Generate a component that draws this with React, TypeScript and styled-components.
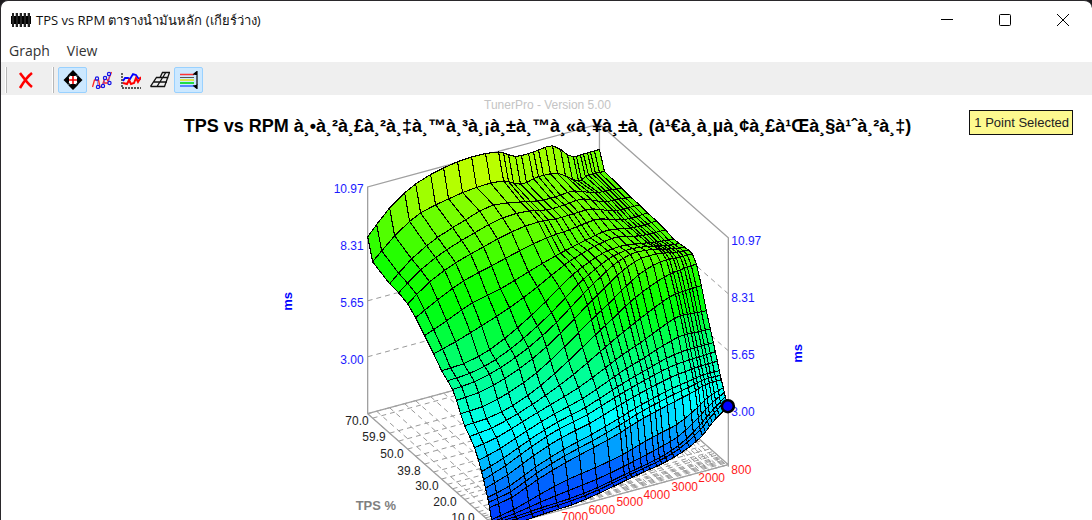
import React from "react";
import styled, { createGlobalStyle } from "styled-components";

const Global = createGlobalStyle`
  * { box-sizing: border-box; }
  html, body { margin: 0; background: #1c1a1d; overflow: hidden; }
  button { font: inherit; color: inherit; }
`;

const Window = styled.div`
  min-height: 100vh;
  display: flex;
  flex-direction: column;
  background: #fff;
  border-top: 1px solid #2a282b;
  border-left: 1px solid #2a282b;
  border-radius: 8px 8px 0 0;
  overflow: hidden;
  font-family: "Noto Sans", "Open Sans", sans-serif;
`;

const TitleBar = styled.header`
  display: flex;
  align-items: center;
  height: 38px;
  padding-left: 10px;
  gap: 5px;
`;

const WindowTitle = styled.span`
  flex: 1;
  font-family: "Open Sans", "Noto Sans", sans-serif;
  font-size: 13px;
  line-height: 20px;
  color: #111;
  white-space: nowrap;
`;

const WindowControls = styled.div`
  display: flex;
`;

const WindowButton = styled.button`
  display: flex;
  align-items: center;
  justify-content: center;
  width: 58px;
  height: 38px;
  padding: 0;
  border: 0;
  background: transparent;
`;

const MenuBar = styled.nav`
  display: flex;
  align-items: center;
  height: 23px;
  padding-left: 8px;
  gap: 17px;
`;

const MenuItem = styled.button`
  padding: 0;
  border: 0;
  background: transparent;
  font-family: "Open Sans", sans-serif;
  font-size: 14px;
  line-height: 20px;
  color: #333;
`;

const ToolBar = styled.div`
  display: flex;
  align-items: center;
  height: 33px;
  padding: 2px 4px 0;
  background: #efefef;
`;

const Grip = styled.span`
  width: 2px;
  height: 26px;
  background: #b8b8b8;
  border-left: 1px solid #fff;
`;

const Tool = styled.button<{ $on?: boolean }>`
  display: flex;
  align-items: center;
  justify-content: center;
  width: 29px;
  height: 26px;
  padding: 0;
  border: 1px solid ${(p) => (p.$on ? "#99d1ff" : "transparent")};
  border-radius: 2px;
  background: ${(p) => (p.$on ? "#cce8ff" : "transparent")};
`;

const ToolGroup = styled.div<{ $end?: number }>`
  display: flex;
  padding-left: 4px;
  padding-right: ${(p) => p.$end ?? 0}px;
`;

const Plot = styled.main`
  position: relative;
  flex: 1;
  display: grid;
  grid-template-rows: 425px;
  justify-items: stretch;
  font-family: "Liberation Sans", Arial, sans-serif;
`;

const Drawing = styled.svg`
  grid-area: 1 / 1;
  width: 100%;
  height: 425px;
  font-family: "Liberation Sans", Arial, sans-serif;
`;

const Heading = styled.div`
  grid-area: 1 / 1;
  z-index: 1;
  padding-left: 2px;
  text-align: center;
  pointer-events: none;
`;

const Version = styled.p`
  margin: 0;
  padding-top: 2px;
  font-size: 12px;
  line-height: 16px;
  color: #c4c4c4;
`;

const ChartTitle = styled.h1`
  margin: 0;
  padding-top: 2px;
  font-size: 18px;
  font-weight: 700;
  line-height: 22px;
  color: #000;
  white-space: nowrap;
`;

const Selection = styled.output`
  position: absolute;
  z-index: 2;
  top: 15px;
  right: 19px;
  padding: 0 3px 0 4px;
  border: 1px solid #111;
  background: #fdf98f;
  font-size: 13px;
  line-height: 23px;
  color: #222;
`;

/* Oblique projection of the plot box: an RPM offset runs right and up,
   a TPS offset runs right and down. */
const RPM_SPAN = 232;
const TPS_SPAN = 129;
const floorY = (c: number, r: number) => 414 - (63 * c) / RPM_SPAN + (114 * r) / TPS_SPAN;

const knotC = [0, 22, 48, 76, 104, 131, 148, 166, 185, 206, 216, 232];
const knotR = [0, 5, 22, 31, 40, 48, 57, 66, 74, 86, 93, 97, 107, 116, 122, 124, 126, 129];
const heights = [
  [237, 208, 184, 168, 157, 152, 156.5, 152, 145.7, 157, 154, 149.5],
  [262, 236, 213, 199, 187.5, 181, 184.3, 176.7, 173.3, 181, 175, 171.5],
  [284, 259, 237.5, 220, 205, 202, 201, 197, 191, 193, 191, 188],
  [293, 270, 250, 233, 218, 211, 210, 205, 199, 202, 200, 197],
  [304, 282, 263, 247, 232, 222, 219, 214, 209, 211, 209, 205],
  [318, 300, 281, 266, 251, 238, 232, 225, 219, 220, 218, 213],
  [336, 321, 303, 289, 272, 256, 247, 238, 230, 228, 226, 221],
  [354, 342, 326, 308, 287, 265, 254, 244, 237, 236, 234, 230],
  [371, 364, 350, 328, 302, 275, 262, 251, 245, 243, 242, 239],
  [392, 384, 370, 350, 325, 296, 279, 263, 253, 250, 250, 248],
  [414, 407, 393, 373, 347, 320, 304, 286, 270, 260, 258, 254],
  [426, 419, 406, 386, 361, 335, 319, 302, 287, 274, 270, 264],
  [448, 438, 422, 405, 388, 368, 355, 343, 329, 316, 314, 311],
  [480, 466, 447, 429, 415, 398, 388, 378, 368, 360, 357, 352],
  [508, 498, 480, 463, 448, 433, 422, 412, 402, 391, 385, 380],
  [520, 510, 495, 480, 468, 455, 445, 435, 425, 408, 398, 388],
  [524, 517, 508, 499, 488, 475, 467, 458, 446, 426, 414, 397],
  [530, 523, 514, 505, 493, 480, 472, 464, 453, 436, 423, 406],
];

const cols = [0, 9, 22, 37, 48, 63, 76, 90, 104, 118, 131, 136, 141, 148, 154, 161, 166, 171, 178, 185, 193, 200, 206, 209, 213, 216, 220, 223, 227, 232];
const rows = [0, 5, 22, 31, 40, 48, 57, 66, 74, 80, 85, 89, 93, 97, 102, 107, 111, 114, 116, 118, 120, 121, 122, 124, 125, 126, 127, 129];

/* Monotone cubic through the knots. */
function curve(xs: number[], ys: number[], x: number): number {
  const n = xs.length;
  let i = 0;
  while (i < n - 2 && x > xs[i + 1]) i++;
  const d = (k: number) => (ys[k + 1] - ys[k]) / (xs[k + 1] - xs[k]);
  const slope = (k: number) => {
    if (k === 0) return d(0);
    if (k === n - 1) return d(n - 2);
    const a = d(k - 1);
    const b = d(k);
    return a * b <= 0 ? 0 : (2 * a * b) / (a + b);
  };
  const h = xs[i + 1] - xs[i];
  const t = (x - xs[i]) / h;
  const t2 = t * t;
  const t3 = t2 * t;
  return (
    (2 * t3 - 3 * t2 + 1) * ys[i] +
    (t3 - 2 * t2 + t) * h * slope(i) +
    (3 * t2 - 2 * t3) * ys[i + 1] +
    (t3 - t2) * h * slope(i + 1)
  );
}

const surface = rows.map((r) =>
  cols.map((c) => curve(knotR, heights.map((line) => curve(knotC, line, c)), r))
);

const stops: [number, number[]][] = [
  [0, [0, 45, 255]],
  [22, [0, 90, 255]],
  [68, [0, 255, 255]],
  [148, [0, 255, 0]],
  [165, [30, 255, 0]],
  [190, [105, 255, 0]],
  [215, [185, 255, 0]],
  [230, [205, 255, 0]],
];

function tint(h: number): string {
  const v = Math.max(0, Math.min(229, h));
  let i = 0;
  while (i < stops.length - 2 && v > stops[i + 1][0]) i++;
  const [a, ca] = stops[i];
  const [b, cb] = stops[i + 1];
  const t = (v - a) / (b - a);
  return `rgb(${ca.map((p, k) => Math.round(p + (cb[k] - p) * t)).join(",")})`;
}

function Mesh() {
  const cells: React.ReactElement[] = [];
  for (let j = 0; j < rows.length - 1; j++) {
    for (let i = cols.length - 2; i >= 0; i--) {
      const corners = [[i, j], [i + 1, j], [i + 1, j + 1], [i, j + 1]];
      const points = corners.map(([a, b]) => `${367 + cols[a] + rows[b]},${surface[b][a].toFixed(1)}`).join(" ");
      const h = corners.reduce((s, [a, b]) => s + floorY(cols[a], rows[b]) - surface[b][a], 0) / 4;
      cells.push(<polygon key={`${i}-${j}`} points={points} fill={tint(h)} />);
    }
  }
  return <g stroke="#000" strokeWidth="1.1" strokeLinejoin="round" shapeRendering="crispEdges">{cells}</g>;
}

function Box() {
  return (
    <g fill="none" stroke="#a0a0a0" strokeWidth="1.3">
      <g stroke="#999" strokeWidth="1" strokeDasharray="5 4">
        {rows.map((r) => (
          <line key={`r${r}`} x1={367 + r} y1={floorY(0, r)} x2={599 + r} y2={floorY(232, r)} />
        ))}
        {cols.map((c) => (
          <line key={`c${c}`} x1={367 + c} y1={floorY(c, 0)} x2={496 + c} y2={floorY(c, 129)} />
        ))}
        {[244, 301, 357].map((y) => (
          <path key={y} d={`M367 ${y}l232 -63M728 ${y + 50}l-129 -113`} />
        ))}
      </g>
      <path d="M367 414V187L599 124L728 238V467M599 124V351M367 414L599 351L728 465M367 414L496 528L728 465" />
    </g>
  );
}

const msLabels = ["10.97", "8.31", "5.65", "3.00"];
const tpsLabels: [string, number, number][] = [
  ["70.0", 368, 425], ["59.9", 385, 441], ["50.0", 403, 458], ["39.8", 420, 475],
  ["30.0", 438, 490], ["20.0", 456, 506], ["10.0", 474, 522],
];
const rpmLabels: [string, number, number][] = [
  ["800", 731, 474], ["2000", 698, 482], ["3000", 671, 491], ["4000", 643, 499],
  ["5000", 616, 506], ["6000", 588, 514], ["7000", 561, 521],
];

function Chart() {
  return (
    <Drawing viewBox="0 95 1092 425" preserveAspectRatio="xMidYMin meet" role="img" aria-label="3D surface of ms over TPS and RPM">
      <Box />
      <Mesh />
      <g fontSize="12" fill="#1a1aff">
        {msLabels.map((t, i) => (
          <g key={t}>
            <text x="363" y={193 + i * 57} textAnchor="end">{t}</text>
            <text x="731" y={245 + i * 57}>{t}</text>
          </g>
        ))}
      </g>
      <g fontSize="12" fill="#222" textAnchor="end">
        {tpsLabels.map(([t, x, y]) => <text key={t} x={x} y={y}>{t}</text>)}
      </g>
      <g fontSize="12" fill="#ff1a1a">
        {rpmLabels.map(([t, x, y]) => <text key={t} x={x} y={y}>{t}</text>)}
      </g>
      <g fontSize="13" fontWeight="700" fill="#0000ff">
        <text transform="translate(291 311) rotate(-90)">ms</text>
        <text transform="translate(802 363) rotate(-90)">ms</text>
      </g>
      <text x="355" y="510" fontSize="13" fontWeight="700" fill="#808080">TPS %</text>
      <circle cx="727.5" cy="406.5" r="6" fill="#0000ff" stroke="#000" strokeWidth="2.6" />
    </Drawing>
  );
}

const ChipIcon = () => (
  <svg width="20" height="16" viewBox="0 0 20 16" shapeRendering="crispEdges" aria-hidden="true">
    <path d="M0 4h20v8H0z" fill="#000" />
    <path d="M2 1v14M6 1v14M10 1v14M14 1v14M18 1v14" stroke="#222" strokeWidth="2" />
    <path d="M4 1v3M8 1v3M12 1v3M16 1v3M4 12v3M8 12v3M12 12v3M16 12v3" stroke="#bbb" strokeWidth="1" />
  </svg>
);

const DeleteIcon = () => (
  <svg width="18" height="18" viewBox="0 0 18 18" aria-hidden="true">
    <path d="M3 2C7 7 10 12 15 16M15 2C11 5 6 12 3 17" fill="none" stroke="#f00" strokeWidth="2.6" />
  </svg>
);

const MoveIcon = () => (
  <svg width="20" height="20" viewBox="0 0 20 20" aria-hidden="true">
    <path d="M10 0l5.500 5.500H4.500zM10 20l5.500-5.500H4.500zM.5 10L6 4.500v11zM19.500 10L14 4.500v11z" fill="#000" />
    <rect x="5.500" y="5.500" width="9" height="9" rx="2" fill="#fff" stroke="#000" />
    <path d="M10 6v8M6 10h8" stroke="#e00" strokeWidth="1.600" />
  </svg>
);

const PointsIcon = () => (
  <svg width="20" height="18" viewBox="0 0 20 18" fill="none" aria-hidden="true">
    <path d="M.5 16L2.500 9H6.500L8 16H10L12 9L14 7L16 10L19.500 1M12 8V12H16" stroke="#f22" strokeWidth="1.300" />
    <path d="M5 8L6 16L11 15L13 7L17 3V12" stroke="#55f" strokeWidth="0.700" />
    <g stroke="#1414e6" strokeWidth="1.200" fill="#efefef">
      <circle cx="5" cy="7.500" r="1.600" />
      <circle cx="6" cy="16" r="1.600" />
      <circle cx="11" cy="15" r="1.600" />
      <circle cx="13" cy="7" r="1.600" />
      <circle cx="17" cy="3" r="1.600" />
      <circle cx="17.500" cy="12" r="1.600" />
    </g>
  </svg>
);

const TraceIcon = () => (
  <svg width="20" height="18" viewBox="0 0 20 18" fill="none" aria-hidden="true">
    <path d="M1 2v15H20" stroke="#222" strokeWidth="1.400" strokeDasharray="2 1" />
    <path d="M2 10l2-3h3l2 1 3-5 3 1 2 3 3 1" stroke="#00f" strokeWidth="1.800" />
    <path d="M2 12l4 1 2-4 2 4 3-1 2-5 2 4 3-5" stroke="#f00" strokeWidth="2" />
  </svg>
);

const GridIcon = () => (
  <svg width="20" height="18" viewBox="0 0 20 18" fill="none" stroke="#111" strokeWidth="1.300" aria-hidden="true">
    <path d="M.5 15.500H14.500L19.500 1.500H12.500L10 6.500H6.500L.5 15.500M3.500 11H17M9 6.500H18.500M7 15.500L15.500 2" />
  </svg>
);

const BarsIcon = () => (
  <svg width="20" height="18" viewBox="0 0 20 18" aria-hidden="true">
    <path d="M1 3.500h14" stroke="#f33" strokeWidth="1.600" />
    <path d="M1 6.500h14" stroke="#555" />
    <path d="M1 9h14" stroke="#dfe64a" strokeWidth="2" />
    <path d="M1 12h14" stroke="#2d4" strokeWidth="2" />
    <path d="M1 15h14" stroke="#36f" strokeWidth="1.600" />
    <path d="M18 1v16M15 3l3-2.500v3zM15 15l3 2.500v-3z" fill="#000" stroke="#000" strokeWidth="1.200" />
  </svg>
);

export default function App() {
  return (
    <Window>
      <Global />
      <TitleBar>
        <ChipIcon />
        <WindowTitle>TPS vs RPM ตารางนำมันหลัก (เกียร์ว่าง)</WindowTitle>
        <WindowControls>
          <WindowButton aria-label="Minimize">
            <svg width="12" height="12"><path d="M0 5.500h12" stroke="#000" /></svg>
          </WindowButton>
          <WindowButton aria-label="Maximize">
            <svg width="12" height="12"><rect x=".5" y=".5" width="11" height="11" rx="1" fill="none" stroke="#000" /></svg>
          </WindowButton>
          <WindowButton aria-label="Close">
            <svg width="12" height="12"><path d="M0 0L12 12M12 0L0 12" stroke="#000" /></svg>
          </WindowButton>
        </WindowControls>
      </TitleBar>
      <MenuBar>
        <MenuItem>Graph</MenuItem>
        <MenuItem>View</MenuItem>
      </MenuBar>
      <ToolBar>
        <Grip />
        <ToolGroup $end={12}>
          <Tool aria-label="Close graph"><DeleteIcon /></Tool>
        </ToolGroup>
        <Grip />
        <ToolGroup>
          <Tool $on aria-label="Move"><MoveIcon /></Tool>
          <Tool aria-label="Points"><PointsIcon /></Tool>
          <Tool aria-label="Trace"><TraceIcon /></Tool>
          <Tool aria-label="Grid"><GridIcon /></Tool>
          <Tool $on aria-label="Color scale"><BarsIcon /></Tool>
        </ToolGroup>
      </ToolBar>
      <Plot>
        <Chart />
        <Heading>
          <Version>TunerPro - Version 5.00</Version>
          <ChartTitle>TPS vs RPM à¸•à¸²à¸£à¸²à¸‡à¸™à¸³à¸¡à¸±à¸™à¸«à¸¥à¸±à¸ (à¹€à¸à¸µà¸¢à¸£à¹Œà¸§à¹ˆà¸²à¸‡)</ChartTitle>
        </Heading>
        <Selection>1 Point Selected</Selection>
      </Plot>
    </Window>
  );
}
